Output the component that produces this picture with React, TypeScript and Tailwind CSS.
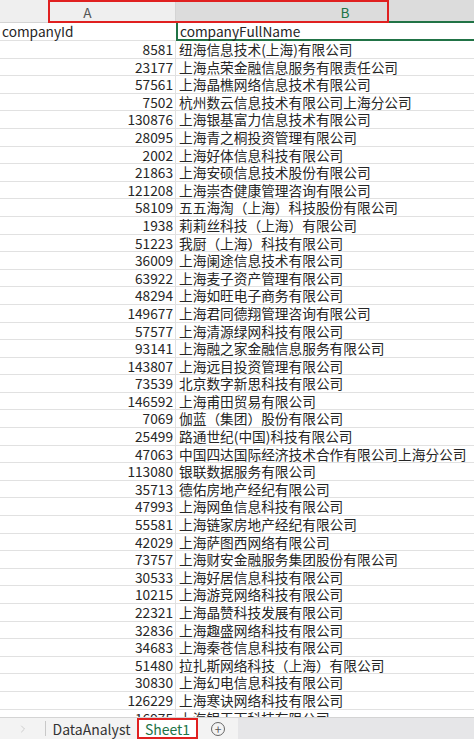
import { ChevronRight } from 'lucide-react';

const rows: [string, string][] = [
  ['8581', '纽海信息技术(上海)有限公司'],
  ['23177', '上海点荣金融信息服务有限责任公司'],
  ['57561', '上海晶樵网络信息技术有限公司'],
  ['7502', '杭州数云信息技术有限公司上海分公司'],
  ['130876', '上海银基富力信息技术有限公司'],
  ['28095', '上海青之桐投资管理有限公司'],
  ['2002', '上海好体信息科技有限公司'],
  ['21863', '上海安硕信息技术股份有限公司'],
  ['121208', '上海崇杏健康管理咨询有限公司'],
  ['58109', '五五海淘（上海）科技股份有限公司'],
  ['1938', '莉莉丝科技（上海）有限公司'],
  ['51223', '我厨（上海）科技有限公司'],
  ['36009', '上海阑途信息技术有限公司'],
  ['63922', '上海麦子资产管理有限公司'],
  ['48294', '上海如旺电子商务有限公司'],
  ['149677', '上海君同德翔管理咨询有限公司'],
  ['57577', '上海清源绿网科技有限公司'],
  ['93141', '上海融之家金融信息服务有限公司'],
  ['143807', '上海远目投资管理有限公司'],
  ['73539', '北京数字新思科技有限公司'],
  ['146592', '上海甫田贸易有限公司'],
  ['7069', '伽蓝（集团）股份有限公司'],
  ['25499', '路通世纪(中国)科技有限公司'],
  ['47063', '中国四达国际经济技术合作有限公司上海分公司'],
  ['113080', '银联数据服务有限公司'],
  ['35713', '德佑房地产经纪有限公司'],
  ['47993', '上海网鱼信息科技有限公司'],
  ['55581', '上海链家房地产经纪有限公司'],
  ['42029', '上海萨图西网络有限公司'],
  ['73757', '上海财安金融服务集团股份有限公司'],
  ['30533', '上海好居信息科技有限公司'],
  ['10215', '上海游竞网络科技有限公司'],
  ['22321', '上海晶赞科技发展有限公司'],
  ['32836', '上海趣盛网络科技有限公司'],
  ['34683', '上海秦苍信息科技有限公司'],
  ['51480', '拉扎斯网络科技（上海）有限公司'],
  ['30830', '上海幻电信息科技有限公司'],
  ['126229', '上海寒诀网络科技有限公司'],
  ['16975', '上海银天下科技有限公司'],
];

const font = { fontFamily: '"Noto Sans CJK SC", "Noto Sans", sans-serif' };

export default function App() {
  return (
    <div className="relative flex h-[739px] w-[474px] flex-col overflow-hidden bg-white text-[13.7px] text-[#262626]" style={font}>
      {/* column headers */}
      <div className="flex h-[23px] shrink-0 leading-[16px]">
        <div className="flex w-[176px] shrink-0 items-end justify-center border-r border-b border-[#d4d4d4] bg-[#efefef] pb-[2px] text-[#555]">
          A
        </div>
        <div className="flex w-[338px] shrink-0 items-end justify-center border-b-2 border-[#217346] bg-[#dcdcdc] pb-[1px] text-[#217346]">
          B
        </div>
      </div>

      {/* cells */}
      <div className="flex-1 overflow-hidden">
        <div className="flex h-[18px] leading-[17px]">
          <div className="w-[176px] shrink-0 border-b border-[#e1e1e1] pl-[2px]">companyId</div>
          <div className="w-[338px] shrink-0 border-l-2 border-b-2 border-[#217346] pl-[2px]">companyFullName</div>
        </div>
        {rows.map(([id, name]) => (
          <div key={id} className="flex h-[17.6px] leading-[16px]">
            <div className="w-[176px] shrink-0 border-r border-b border-[#e1e1e1] pr-[2px] text-right">{id}</div>
            <div className="w-[338px] shrink-0 whitespace-nowrap border-b border-[#e1e1e1] pl-[3px]">{name}</div>
          </div>
        ))}
      </div>

      {/* sheet tabs */}
      <div className="flex h-[22px] shrink-0 items-stretch border-t border-[#d4d4d4] bg-[#f3f3f3] text-[14px] leading-[16px]">
        <div className="flex w-[45px] items-center justify-center text-[#c0c0c0]">
          <ChevronRight className="h-3 w-3" strokeWidth={1.5} />
        </div>
        <div className="my-[3px] w-px bg-[#c8c8c8]" />
        <div className="flex w-[91px] items-center justify-center text-[#333]">DataAnalyst</div>
        <div className="flex w-[61px] items-center justify-center border-2 border-[#e02020] bg-white text-[#217346]">Sheet1</div>
        <div className="flex w-[40px] items-center justify-center">
          <div className="flex h-[14px] w-[14px] items-center justify-center rounded-full border border-[#666] text-[12px] leading-none text-[#555]">+</div>
        </div>
        <div className="flex-1 bg-[#e6e6e8]" />
      </div>

      {/* red annotation box */}
      <div className="pointer-events-none absolute left-[48px] top-0 h-[23px] w-[341px] border-2 border-[#e02020]" />
    </div>
  );
}
